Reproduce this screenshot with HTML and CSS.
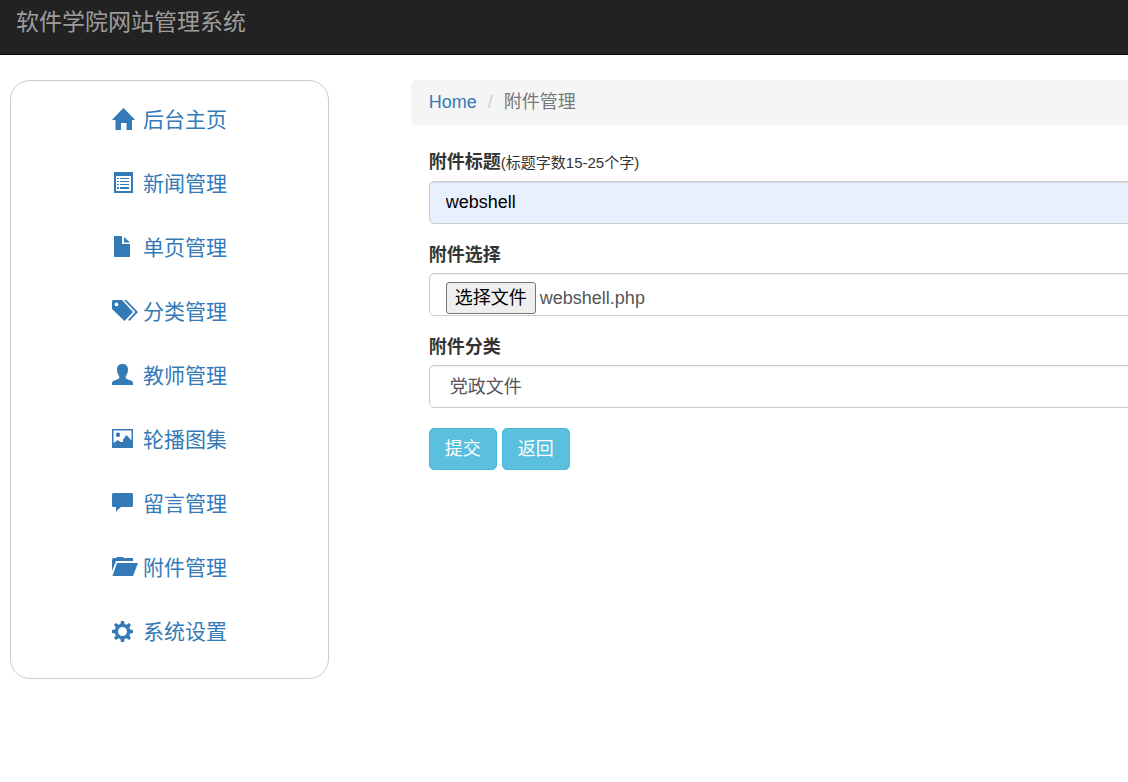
FILE: index.html
```html
<!DOCTYPE html>
<html lang="zh-CN">
<head>
    <meta charset="UTF-8">
    <meta name="viewport" content="width=device-width, initial-scale=1.0">
    <title>软件学院网站管理系统</title>
    <link rel="stylesheet" href="styles.css">
</head>
<body>
    <nav class="navbar">
        <a class="navbar-brand" href="#">软件学院网站管理系统</a>
    </nav>

    <div class="layout">
        <aside class="sidebar">
            <ul class="menu">
                <li><a href="#">
                    <svg class="icon" viewBox="0 0 26 22"><path d="M11.5 0 22.5 11.2V12H20v10h-5.5v-7H9v7H3.500V12H.5v-.8z"/></svg>
                    <span>后台主页</span>
                </a></li>
                <li><a href="#">
                    <svg class="icon" viewBox="0 0 26 22"><path fill-rule="evenodd" d="M2 0h19v21H2zM4 4v15h15V4zM5 6h2v1H5zm3 0h9v1H8zM5 9h2v1H5zm3 0h9v1H8zM5 12h2v1H5zm3 0h9v1H8zM5 15h2v2H5zm3 0h9v2H8z"/></svg>
                    <span>新闻管理</span>
                </a></li>
                <li><a href="#">
                    <svg class="icon" viewBox="0 0 26 22"><path d="M2 0h8v8h8v12.500l-.5.500h-15L2 20.500zM12 1l6 5.500h-6z"/></svg>
                    <span>单页管理</span>
                </a></li>
                <li><a href="#">
                    <svg class="icon" viewBox="0 0 26 22"><path fill-rule="evenodd" d="M0 1 1 0h9l11 12-8.500 9L0 9zM4.500 2.500a1.900 1.900 0 1 0 0 3.800 1.900 1.900 0 0 0 0-3.800zM12 0h2.200L26 12l-8.500 9-1.300-1.300L23.300 12z"/></svg>
                    <span>分类管理</span>
                </a></li>
                <li><a href="#">
                    <svg class="icon" viewBox="0 0 26 22"><path d="M10.500 0C14 0 16 2 16 5.500c0 3-1 5-2.200 6.500v2.500l6 2.500q1.200.6 1.200 2V21H0v-2q0-1.400 1.200-2l6-2.500V12C6 10.500 5 8.500 5 5.500 5 2 7 0 10.500 0z"/></svg>
                    <span>教师管理</span>
                </a></li>
                <li><a href="#">
                    <svg class="icon" viewBox="0 0 26 22"><path fill-rule="evenodd" d="M0 1h21v19H0zM1.500 2.500V15l4.500-3 2.500 2H11V11.500l3.500-4.500 5 5.500v-10zM6 4.500a2.200 2.200 0 1 1 0 4.400 2.200 2.200 0 0 1 0-4.400z"/></svg>
                    <span>轮播图集</span>
                </a></li>
                <li><a href="#">
                    <svg class="icon" viewBox="0 0 26 22"><path d="M1 1h19l1 1v12l-1 1H9l-5 4.500V15H1l-1-1V2z"/></svg>
                    <span>留言管理</span>
                </a></li>
                <li><a href="#">
                    <svg class="icon" viewBox="0 0 26 22"><path d="M0 3.500 1 2h3l1-1h6l1 1h9v3H4L0 15zM5 7h21l-5 13H.5z"/></svg>
                    <span>附件管理</span>
                </a></li>
                <li><a href="#">
                    <svg class="icon" viewBox="0 0 26 22"><path fill-rule="evenodd" d="M9 1h3l.6 3 2 .8L17 3l2 2-1.700 2.500.8 2 2.900.5v3l-2.900.5-.8 2L19 18l-2 2-2.400-1.700-2 .8-.6 2.900H9l-.6-2.900-2-.8L4 20l-2-2 1.700-2.500-.8-2L0 13v-3l2.900-.5.8-2L2 5l2-2 2.400 1.800 2-.8zM10.500 7a4.500 4.500 0 1 0 0 9 4.500 4.500 0 0 0 0-9z"/></svg>
                    <span>系统设置</span>
                </a></li>
            </ul>
        </aside>

        <main class="content">
            <ol class="breadcrumb">
                <li><a href="#">Home</a></li>
                <li class="active">附件管理</li>
            </ol>

            <form class="form">
                <div class="form-group">
                    <label for="title">附件标题<small>(标题字数15-25个字)</small></label>
                    <input class="form-control autofill" type="text" id="title" value="webshell">
                </div>
                <div class="form-group">
                    <label for="file">附件选择</label>
                    <div class="form-control file-control">
                        <input type="file" id="file" hidden>
                        <button type="button" class="file-btn" id="file-btn">选择文件</button>
                        <span id="file-name">webshell.php</span>
                    </div>
                </div>
                <div class="form-group">
                    <label for="category">附件分类</label>
                    <select class="form-control" id="category">
                        <option>党政文件</option>
                    </select>
                </div>
                <div class="actions">
                    <button type="submit" class="btn">提交</button>
                    <button type="button" class="btn">返回</button>
                </div>
            </form>
        </main>
    </div>

    <script>
        const fileInput = document.getElementById('file');

        document.getElementById('file-btn').addEventListener('click', () => fileInput.click());

        fileInput.addEventListener('change', () => {
            if (fileInput.files.length) {
                document.getElementById('file-name').textContent = fileInput.files[0].name;
            }
        });
    </script>
</body>
</html>
```
FILE: styles.css
```css
* {
    box-sizing: border-box;
}

body {
    margin: 0;
    overflow-x: hidden;
    background: #fff;
    color: #333;
    font-family: "Liberation Sans", "Noto Sans CJK SC", sans-serif;
    font-size: 18px;
    line-height: 26px;
}

a {
    color: #337ab7;
    text-decoration: none;
}

ul,
ol {
    list-style: none;
    margin: 0;
    padding: 0;
}

.navbar {
    height: 55px;
    padding: 8px 16px;
    background: #222;
    border-bottom: 1px solid #080808;
}

.navbar-brand {
    display: block;
    color: #9d9d9d;
    font-size: 23px;
    line-height: 28px;
}

/* the form column runs on past the right edge of the window */
.layout {
    display: grid;
    grid-template-columns: 8fr 19fr;
    align-items: start;
    gap: 82px;
    margin: 25px -40px 0 10px;
}

.sidebar {
    padding: 7px 0 14px;
    border: 1px solid #ccc;
    border-radius: 20px;
}

.menu a {
    display: flex;
    align-items: center;
    justify-content: center;
    gap: 5px;
    height: 64px;
    font-size: 21px;
}

.icon {
    width: 26px;
    height: 22px;
    margin-bottom: 2px;
    fill: currentColor;
}

.breadcrumb {
    display: flex;
    padding: 9px 18px 10px;
    background: #f5f5f5;
    border-radius: 5px;
}

.breadcrumb li + li::before {
    content: "/";
    padding: 0 11px;
    color: #ccc;
}

.breadcrumb .active {
    color: #777;
}

.form {
    padding: 24px 18px 0;
}

.form-group {
    margin-bottom: 18px;
}

label {
    display: block;
    margin-bottom: 5px;
    font-weight: bold;
}

label small {
    font-size: 15px;
    font-weight: normal;
}

.form-control {
    display: block;
    width: 100%;
    height: 43px;
    padding: 7px 16px;
    border: 1px solid #ccc;
    border-radius: 5px;
    background: #fff;
    box-shadow: inset 0 1px 1px rgba(0, 0, 0, 0.075);
    color: #555;
    font: inherit;
}

select.form-control {
    padding-left: 20px;
    appearance: none;
}

.autofill {
    background: #e8f0fe;
    color: #000;
}

.file-control {
    display: flex;
    align-items: center;
    gap: 4px;
    padding: 8px 16px 1px;
}

.file-btn {
    height: 32px;
    padding: 0 8px;
    border: 1px solid #767676;
    border-radius: 3px;
    background: #efefef;
    color: #000;
    font: inherit;
}

.actions {
    display: flex;
    gap: 5px;
    padding-top: 2px;
}

.btn {
    height: 42px;
    padding: 0 15px;
    border: 1px solid #46b8da;
    border-radius: 5px;
    background: #5bc0de;
    color: #fff;
    font: inherit;
}
```
